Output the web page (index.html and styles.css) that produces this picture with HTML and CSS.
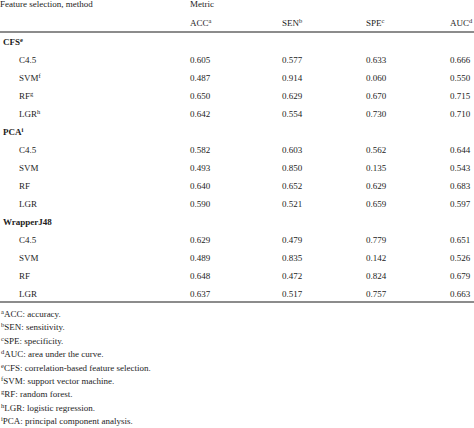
FILE: index.html
```html
<!DOCTYPE html>
<html>
<head>
<meta charset="utf-8">
<link rel="stylesheet" href="styles.css">
</head>
<body>
<div class="page">
  <div class="row head1">
    <div class="c0">Feature selection, method</div>
    <div>Metric</div>
  </div>
  <div class="row head2">
    <div></div>
    <div>ACC<sup>a</sup></div>
    <div>SEN<sup>b</sup></div>
    <div>SPE<sup>c</sup></div>
    <div>AUC<sup>d</sup></div>
  </div>
  <div class="tbody">
    <div class="row group"><div class="c0"><b>CFS<sup>e</sup></b></div></div>
    <div class="row item"><div class="c0">C4.5</div><div>0.605</div><div>0.577</div><div>0.633</div><div>0.666</div></div>
    <div class="row item"><div class="c0">SVM<sup>f</sup></div><div>0.487</div><div>0.914</div><div>0.060</div><div>0.550</div></div>
    <div class="row item"><div class="c0">RF<sup>g</sup></div><div>0.650</div><div>0.629</div><div>0.670</div><div>0.715</div></div>
    <div class="row item"><div class="c0">LGR<sup>h</sup></div><div>0.642</div><div>0.554</div><div>0.730</div><div>0.710</div></div>
    <div class="row group"><div class="c0"><b>PCA<sup>i</sup></b></div></div>
    <div class="row item"><div class="c0">C4.5</div><div>0.582</div><div>0.603</div><div>0.562</div><div>0.644</div></div>
    <div class="row item"><div class="c0">SVM</div><div>0.493</div><div>0.850</div><div>0.135</div><div>0.543</div></div>
    <div class="row item"><div class="c0">RF</div><div>0.640</div><div>0.652</div><div>0.629</div><div>0.683</div></div>
    <div class="row item"><div class="c0">LGR</div><div>0.590</div><div>0.521</div><div>0.659</div><div>0.597</div></div>
    <div class="row group"><div class="c0"><b>WrapperJ48</b></div></div>
    <div class="row item"><div class="c0">C4.5</div><div>0.629</div><div>0.479</div><div>0.779</div><div>0.651</div></div>
    <div class="row item"><div class="c0">SVM</div><div>0.489</div><div>0.835</div><div>0.142</div><div>0.526</div></div>
    <div class="row item"><div class="c0">RF</div><div>0.648</div><div>0.472</div><div>0.824</div><div>0.679</div></div>
    <div class="row item"><div class="c0">LGR</div><div>0.637</div><div>0.517</div><div>0.757</div><div>0.663</div></div>
  </div>
  <div class="notes">
    <div><sup>a</sup>ACC: accuracy.</div>
    <div><sup>b</sup>SEN: sensitivity.</div>
    <div><sup>c</sup>SPE: specificity.</div>
    <div><sup>d</sup>AUC: area under the curve.</div>
    <div><sup>e</sup>CFS: correlation-based feature selection.</div>
    <div><sup>f</sup>SVM: support vector machine.</div>
    <div><sup>g</sup>RF: random forest.</div>
    <div><sup>h</sup>LGR: logistic regression.</div>
    <div><sup>i</sup>PCA: principal component analysis.</div>
  </div>
</div>
</body>
</html>
```
FILE: styles.css
```css
html, body {
  margin: 0;
  padding: 0;
  background: #fff;
  overflow: hidden;
}
body {
  font-family: "Liberation Serif", "Times New Roman", serif;
  font-size: 9px;
  color: #1c1c1c;
  width: 474px;
  height: 428px;
}
.page {
  width: 474px;
}
.row {
  display: grid;
  grid-template-columns: 190px 92px 84px 84px 24px;
  white-space: nowrap;
}
.head1 {
  height: 8px;
  line-height: 8px;
}
.head2 {
  padding-top: 6px;
  height: 18px;
  line-height: 18px;
}
.tbody {
  border-top: 2px solid #8c8c8c;
  border-bottom: 2px solid #8c8c8c;
  margin-top: -1px;
}
.tbody .row {
  height: 18px;
  line-height: 18px;
}
.tbody .row:last-child {
  height: 16px;
}
.group .c0 {
  padding-left: 3px;
}
.item .c0 {
  padding-left: 19px;
}
sup {
  font-size: 6.5px;
  line-height: 0;
  vertical-align: 3.5px;
}
.notes {
  padding-top: 5px;
  padding-left: 1px;
  line-height: 13.4px;
}
.notes sup {
  vertical-align: 3px;
}
```
